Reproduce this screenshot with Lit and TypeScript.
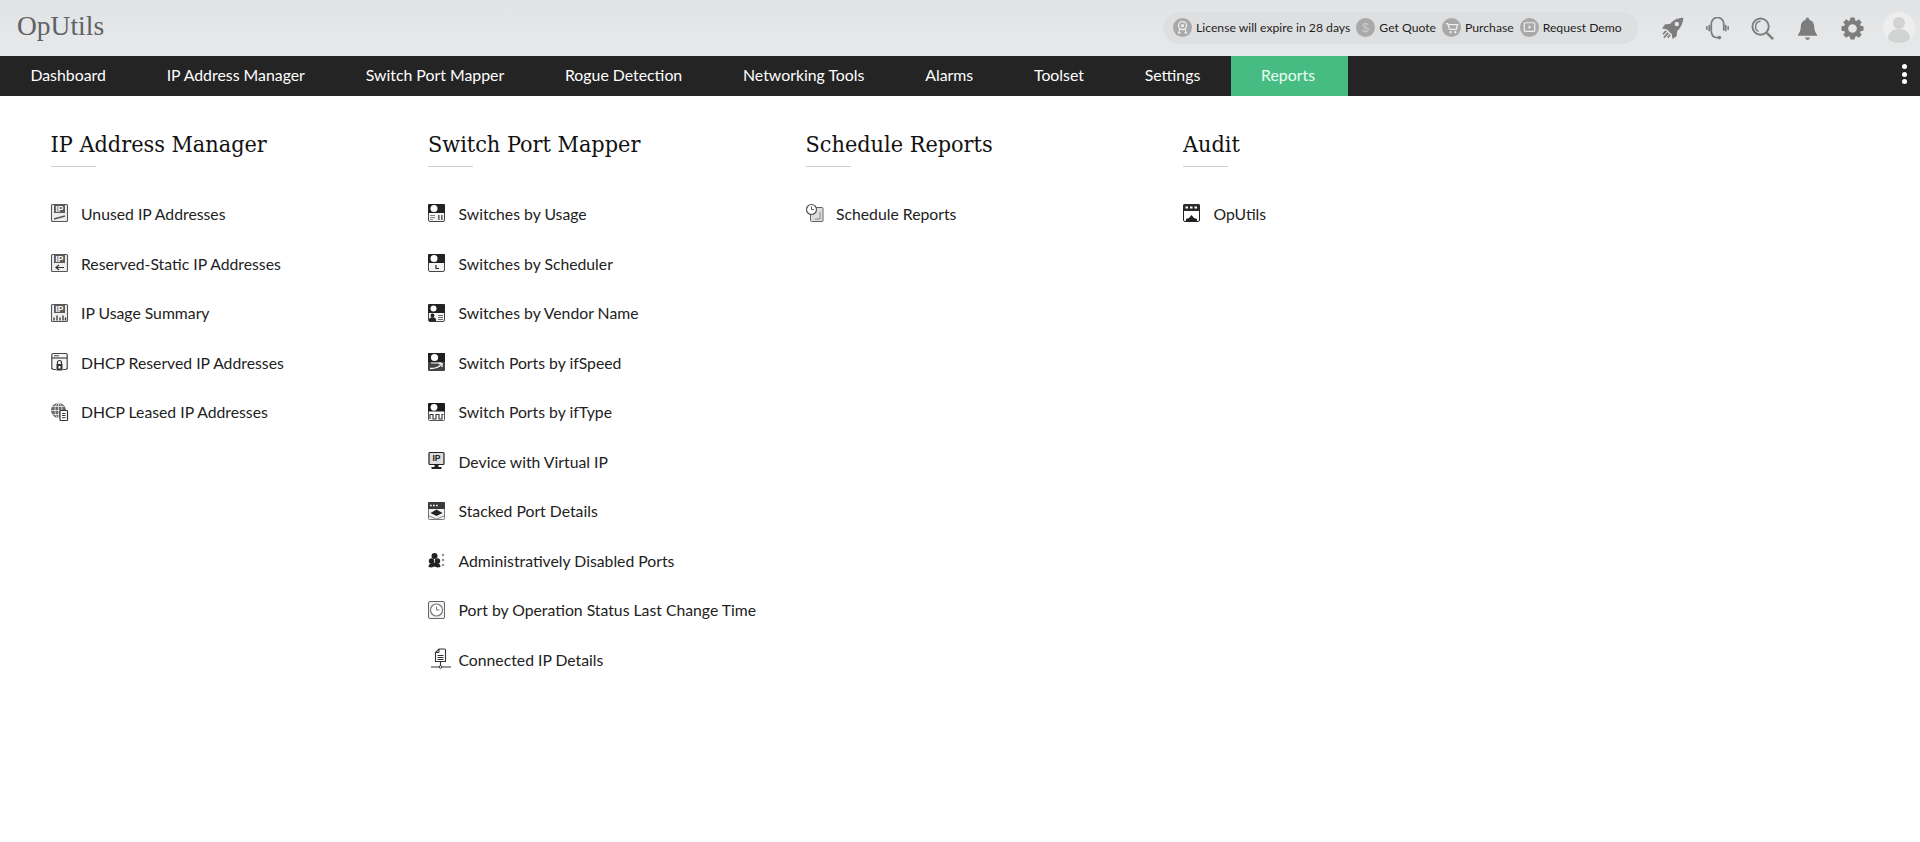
import { LitElement, html, css, svg } from "lit";
import { customElement } from "lit/decorators.js";

const D = "#555";
const ipTag = svg`<rect x="3" y="0.500" width="11" height="8.500" fill="#5c5c5c"/><text x="8.500" y="7.700" font-size="8.500" font-weight="700" font-family="Liberation Sans" fill="#fff" text-anchor="middle">IP</text>`;
const frame = svg`<rect x="0.500" y="0.500" width="16" height="17" rx="1" fill="#eeeeee" stroke="${D}" stroke-width="1.100"/>`;
const swTop = svg`<rect x="0.500" y="0.500" width="16" height="17" rx="1.500" fill="#f4f4f4" stroke="#444"/><path d="M1 0h15a1 1 0 0 1 1 1v8H0V1a1 1 0 0 1 1-1z" fill="#222"/><circle cx="6" cy="4.500" r="3.500" fill="#fff"/>`;

const listIcons: Record<string, unknown> = {
  unused: svg`${frame}${ipTag}<path d="M3 15l11-3" stroke="${D}" stroke-width="1.400"/>`,
  reserved: svg`${frame}${ipTag}<path d="M13 13.500H5M8 11l-3 2.500L8 16" fill="none" stroke="#333" stroke-width="1.200"/>`,
  usage: svg`${frame}${ipTag}<path d="M3 16.500v-3M6 16.500v-5M9 16.500v-3M12 16.500v-5M14.500 16.500v-3" stroke="#333" stroke-width="1.300"/>`,
  dhcpres: svg`<path d="M0.800 16V2a1.500 1.500 0 0 1 1.500-1.500h12.400A1.500 1.500 0 0 1 16.200 2v14" fill="#f6f6f6" stroke="#444" stroke-width="1.200"/><path d="M1 5h15" stroke="#444" stroke-width="1.200"/><path d="M3 2.800h5" stroke="#444"/><path d="M1 15a1.500 1.500 0 0 0 1.500 1.500H5M16 15a1.500 1.500 0 0 1-1.500 1.500H12" fill="none" stroke="#444" stroke-width="1.200"/><rect x="5.500" y="11" width="6" height="6.500" fill="#333"/><path d="M6.500 11V9.500a2 2 0 0 1 4 0V11" fill="none" stroke="#333" stroke-width="1.200"/><rect x="7.500" y="13" width="2" height="2.500" fill="#fff"/>`,
  dhcpleased: svg`<circle cx="7.500" cy="7.500" r="7.500" fill="#6a6a6a"/><path d="M0 7.500h15M7.500 0v15M1.500 3.500h12M1.500 11.500h12" stroke="#eee" stroke-width=".8"/><ellipse cx="7.500" cy="7.500" rx="3.500" ry="7.500" fill="none" stroke="#eee" stroke-width=".8"/><rect x="9" y="7.500" width="7.500" height="10" rx=".8" fill="#fff" stroke="#333" stroke-width="1.200"/><path d="M11 10.500h3.500M11 12.500h3.500M11 14.700h3.500" stroke="#333"/>`,
  swusage: svg`${swTop}<path d="M2 11.500h5M2 13.500h5M2 15.500h3" stroke="#888"/><rect x="10" y="11" width="1.600" height="5" fill="#666"/><rect x="13" y="11" width="1.600" height="5" fill="#666"/>`,
  swsched: svg`${swTop}<path d="M8 11v3.500h3" fill="none" stroke="#222" stroke-width="1.200"/>`,
  swvendor: svg`<rect x="0.500" y="0.500" width="16" height="17" rx="1.500" fill="#f4f4f4" stroke="#444"/><path d="M1 0h15a1 1 0 0 1 1 1v8H0V1a1 1 0 0 1 1-1z" fill="#222"/><circle cx="5.500" cy="4.500" r="3" fill="#fff"/><circle cx="4.500" cy="11.500" r="1.900" fill="#222"/><path d="M1 17.500v-1.800a3.500 2.500 0 0 1 7 0v1.800z" fill="#222"/><path d="M10 11.500h5M10 13.500h5M10 15.500h5" stroke="#666"/>`,
  swspeed: svg`<rect x="0" y="0" width="17" height="18" rx="1" fill="#444"/><rect x="0" y="0" width="17" height="9" fill="#1f1f1f"/><circle cx="6.500" cy="4.500" r="3.600" fill="#fff"/><path d="M3 10h10" stroke="#fff"/><path d="M2 15.500c5 0 9-1 11-4" fill="none" stroke="#fff" stroke-width="1.300"/><path d="M10.500 10.500h3.500v3.500" fill="none" stroke="#fff" stroke-width="1.300"/>`,
  swtype: svg`<rect x="0.500" y="0.500" width="16" height="17" rx="1" fill="#fff" stroke="#555"/><path d="M1 0h15a1 1 0 0 1 1 1v7.500H0V1a1 1 0 0 1 1-1z" fill="#1c1c1c"/><circle cx="6" cy="4.300" r="3.400" fill="#fff"/><path d="M2 16v-4.500h3V16h3v-4.500h3V16h3v-4.500h1.500" fill="none" stroke="#333" stroke-width="1.100"/>`,
  virtual: svg`<rect x="1" y="0.500" width="15" height="12" rx="1" fill="#ddd" stroke="#222" stroke-width="1.200"/><text x="8.500" y="9.300" font-size="8.500" font-weight="700" font-family="Liberation Sans" fill="#222" text-anchor="middle">IP</text><rect x="6.500" y="12.500" width="4" height="2.500" fill="#222"/><rect x="3.500" y="15" width="10" height="2" fill="#222"/>`,
  stacked: svg`<rect x="0.500" y="0.500" width="16" height="17" rx="1" fill="#f0f0f0" stroke="#777"/><rect x="0" y="0" width="17" height="7" rx="1" fill="#3a3a3a"/><path d="M2 3.500h1.700M5 3.500h1.700M8 3.500h1.700" stroke="#fff" stroke-width="1.500"/><path d="M8.500 7.500l6 3.500-6 3-6-3z" fill="#222"/><path d="M1 14l7.500 3 7.500-3" fill="none" stroke="#888"/>`,
  admin: svg`<circle cx="6.500" cy="5" r="3" fill="#222"/><circle cx="3.500" cy="10" r="2.700" fill="#222"/><circle cx="9.500" cy="10" r="2.700" fill="#222"/><path d="M0.500 16c0-3 2-4.500 6-4.500s6 1.500 6 4.500l-3 .5-3-1-3 1z" fill="#222"/><circle cx="15" cy="4" r="1.300" fill="#999"/><circle cx="15" cy="9" r="1.300" fill="#999"/><circle cx="15" cy="14" r="1.300" fill="#999"/>`,
  clock: svg`<rect x="0.500" y="0.500" width="16" height="17" rx="1.500" fill="#f2f2f2" stroke="#666"/><circle cx="8.500" cy="9" r="6" fill="#fff" stroke="#777" stroke-width="1.200"/><path d="M8.500 5.500v3.500h3" fill="none" stroke="#777"/>`,
  schedule: svg`<rect x="4.500" y="3.500" width="12.500" height="14" rx="1" fill="#ddd" stroke="#666"/><path d="M9 15h5M14 8v7" stroke="#888"/><circle cx="5.500" cy="5.500" r="5" fill="#fff" stroke="#555" stroke-width="1.200"/><path d="M5.500 2.500v3h2.500" fill="none" stroke="#555"/>`,
  audit: svg`<rect x="0.500" y="0.500" width="16" height="17" rx="1.500" fill="#fff" stroke="#222"/><rect x="0" y="0" width="17" height="7" rx="1.500" fill="#2a2a2a"/><path d="M2.500 3.500h2.500M7 3.500h2.500M11.500 3.500h2.500" stroke="#fff" stroke-width="1.800"/><path d="M3 18v-3l3-1 2.500-3 2.500 3 3 1v3z" fill="#222"/>`,
  connected: svg`<g transform="translate(2 0)"><path d="M9 -1h5.500a1 1 0 0 1 1 1v11.500h-10V2.500z" fill="#fff" stroke="#333" stroke-width="1.100"/><path d="M9 -1V2.500H5.500" fill="none" stroke="#333"/><path d="M7.500 5.500h6M7.500 7.500h6M7.500 9.500h6" stroke="#333"/><path d="M10.500 11.500V17M1 17h20" stroke="#333" stroke-width="1.100"/><circle cx="10.500" cy="17" r="1.300" fill="#fff" stroke="#333"/></g>`,
};

const sections = [
  { title: "IP Address Manager", items: [
    ["unused", "Unused IP Addresses"], ["reserved", "Reserved-Static IP Addresses"], ["usage", "IP Usage Summary"],
    ["dhcpres", "DHCP Reserved IP Addresses"], ["dhcpleased", "DHCP Leased IP Addresses"]] },
  { title: "Switch Port Mapper", items: [
    ["swusage", "Switches by Usage"], ["swsched", "Switches by Scheduler"], ["swvendor", "Switches by Vendor Name"],
    ["swspeed", "Switch Ports by ifSpeed"], ["swtype", "Switch Ports by ifType"], ["virtual", "Device with Virtual IP"],
    ["stacked", "Stacked Port Details"], ["admin", "Administratively Disabled Ports"],
    ["clock", "Port by Operation Status Last Change Time"], ["connected", "Connected IP Details"]] },
  { title: "Schedule Reports", items: [["schedule", "Schedule Reports"]] },
  { title: "Audit", items: [["audit", "OpUtils"]] },
];

const navItems = ["Dashboard", "IP Address Manager", "Switch Port Mapper", "Rogue Detection", "Networking Tools", "Alarms", "Toolset", "Settings", "Reports"];

const pillIcons = [
  svg`<circle cx="10" cy="8" r="4.200" fill="none" stroke="#eee" stroke-width="1.400"/><circle cx="10" cy="8" r="1.800" fill="#eee"/><path d="M7 12l-1 4 2-.8M13 12l1 4-2-.8" fill="none" stroke="#eee" stroke-width="1.200"/>`,
  svg`<text x="10" y="15" font-size="13" font-family="Liberation Sans" fill="#ccc" text-anchor="middle">$</text>`,
  svg`<path d="M4 6h2l2 6h7l1.500-5H6.500" fill="none" stroke="#eee" stroke-width="1.400"/><circle cx="9" cy="15" r="1.200" fill="#eee"/><circle cx="14" cy="15" r="1.200" fill="#eee"/>`,
  svg`<rect x="4.500" y="5" width="11" height="9" rx="1" fill="none" stroke="#eee" stroke-width="1.300"/><path d="M9 7.500v4l3-2z" fill="#eee"/>`,
];
const pill = [["License will expire in 28 days"], ["Get Quote"], ["Purchase"], ["Request Demo"]];

const G = "#7d7d7d";
const gearTeeth = [0, 45, 90, 135, 180, 225, 270, 315];
const toolIcons = [
  svg`<svg class="tool" viewBox="0 0 24 24"><path d="M23.500 0.500c-6 .5-10.500 2.500-14 6.500L4 7.800 1 12l5 .8 5.200 5.200.8 5 4.200-3 .8-5.500c4-3.500 6-8 6.500-14.500zM16.500 5a2.300 2.300 0 1 1 0 4.600 2.300 2.300 0 0 1 0-4.600z" fill="${G}"/><path d="M5.500 14.500L2 18M7.500 16.500L3 21.500M9.500 18.500L7 21.500" stroke="${G}" stroke-width="1.800"/></svg>`,
  svg`<svg class="tool" viewBox="0 0 24 24"><path d="M5.500 14V7a6.500 6.500 0 0 1 13 0v7" fill="none" stroke="${G}" stroke-width="1.800"/><path d="M5.500 14c0 5 2.500 7.500 6.500 7.500h1" fill="none" stroke="${G}" stroke-width="1.800"/><rect x="2.500" y="8" width="2" height="7" rx="1" fill="${G}"/><rect x="19.500" y="8" width="2" height="7" rx="1" fill="${G}"/><rect x="0" y="9.500" width="1.700" height="4" rx=".8" fill="${G}"/><rect x="22.300" y="9.500" width="1.700" height="4" rx=".8" fill="${G}"/><circle cx="14" cy="21.500" r="1.900" fill="${G}"/></svg>`,
  svg`<svg class="tool" viewBox="0 0 24 24"><circle cx="10" cy="10" r="8.500" fill="none" stroke="${G}" stroke-width="2"/><path d="M10 4.500a5.500 5.500 0 0 0-2 10.500" fill="none" stroke="${G}" stroke-width="1.500"/><path d="M16.500 16.500l6.500 6.500" stroke="${G}" stroke-width="2.500"/></svg>`,
  svg`<svg class="tool" viewBox="0 0 24 24"><path d="M12 0.500a1.800 1.800 0 0 1 1.800 1.800v.6c3.500 1 5.200 3.800 5.200 7.100 0 4.500 1.500 6.500 3 8.500v1H2v-1c1.500-2 3-4 3-8.500 0-3.300 1.700-6.100 5.200-7.100v-.6A1.800 1.800 0 0 1 12 .5z" fill="${G}"/><path d="M9.500 21.500h5a2.500 2.500 0 0 1-5 0z" fill="${G}"/></svg>`,
  svg`<svg class="tool" viewBox="0 0 24 24"><g fill="${G}">${gearTeeth.map((a) => svg`<rect x="9.500" y="0.500" width="5" height="6" rx="1" transform="rotate(${a} 12 12)"/>`)}</g><circle cx="12" cy="12" r="6.800" fill="none" stroke="${G}" stroke-width="4.500"/></svg>`,
];

@customElement("app-root")
export class AppRoot extends LitElement {
  static styles = css`
    :host { display: block; font-family: "Lato", "Liberation Sans", sans-serif; background: #fff; min-height: 842px; color: #222; }
    .top { height: 56px; display: flex; align-items: center; background: linear-gradient(#e0e2e4, #e5e7e9 60%, #e6e7e9); padding-left: 17px; }
    .logo { font-family: "Liberation Serif", serif; font-size: 27.500px; color: #606264; width: 1146px; padding-bottom: 4px; }
    .pill { display: flex; align-items: center; height: 32px; width: 475px; box-sizing: border-box; padding: 0 0 2px 10px; border-radius: 16px; background: #dedfe0; font-size: 12.200px; color: #1e1e1e; }
    .pill svg { width: 19px; height: 19px; flex: none; margin-right: 4px; }
    .pill span { margin-right: 6px; white-space: nowrap; }
    .tools { display: flex; align-items: center; gap: 22px; margin-left: 23px; }
    .tool { width: 23px; height: 23px; display: block; }
    .avatar { width: 32px; height: 32px; border-radius: 50%; background: #eeeeee; margin-left: -3px; display: block; }
    .nav { height: 40px; background: #242424; display: flex; align-items: stretch; position: relative; font-size: 15.850px; color: #fff; }
    .nav a { padding: 0 30.400px 3px; display: flex; align-items: center; white-space: nowrap; }
    .nav a.on { background: #47bc82; color: #e9fff3; padding-right: 32.500px; }
    .kebab { position: absolute; right: 13px; top: 8px; display: flex; flex-direction: column; gap: 2.500px; }
    .kebab i { width: 5px; height: 5px; border-radius: 50%; background: #fff; display: block; }
    .cols { display: grid; grid-template-columns: repeat(4, 377.500px); padding: 34px 0 0 50.500px; }
    h2 { margin: 0; font-family: "DejaVu Serif", serif; font-stretch: condensed; font-weight: 400; font-size: 23.200px; line-height: 28px; color: #111; white-space: nowrap; }
    .rule { width: 45px; height: 1px; background: #cfcfcf; margin: 8px 0 21.700px; }
    .row { height: 49.550px; display: flex; align-items: center; font-size: 15.750px; color: #222; white-space: nowrap; }
    .row svg { width: 18px; height: 18px; flex: none; margin-right: 12.500px; overflow: visible; }
  `;

  render() {
    return html`
      <div class="top">
        <div class="logo">OpUtils</div>
        <div class="pill">
          ${pill.map(([t], i) => html`<svg viewBox="0 0 20 20"><circle cx="10" cy="10" r="10" fill="#a9a9a9"/>${pillIcons[i]}</svg><span>${t}</span>`)}
        </div>
        <div class="tools">
          ${toolIcons}
          <svg class="avatar" viewBox="0 0 32 32"><circle cx="16" cy="11" r="6" fill="#d2d3d3"/><path d="M5 27c0-7 5-10 11-10s11 3 11 10c-3 3-7 4-11 4s-8-1-11-4z" fill="#d2d3d3"/></svg>
        </div>
      </div>
      <div class="nav">
        ${navItems.map((n) => html`<a class=${n === "Reports" ? "on" : ""}>${n}</a>`)}
        <div class="kebab"><i></i><i></i><i></i></div>
      </div>
      <div class="cols">
        ${sections.map((s) => html`
          <div>
            <h2>${s.title}</h2>
            <div class="rule"></div>
            ${s.items.map(([ic, t]) => html`<div class="row"><svg viewBox="0 0 18 18">${listIcons[ic]}</svg><span>${t}</span></div>`)}
          </div>`)}
      </div>
    `;
  }
}
